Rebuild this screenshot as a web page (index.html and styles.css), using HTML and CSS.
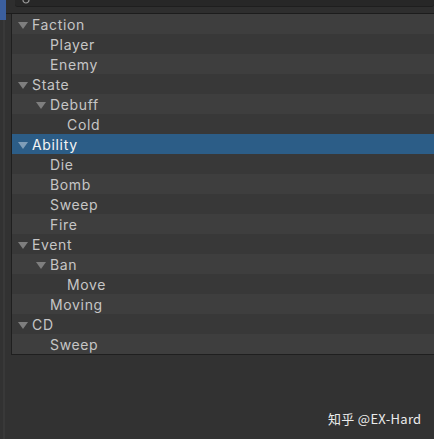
FILE: index.html
```html
<!DOCTYPE html>
<html>
<head>
<meta charset="utf-8">
<link rel="stylesheet" href="styles.css">
</head>
<body>
<div class="window">
  <div class="gutter">
    <div class="gutter-blue"></div>
    <div class="gutter-line"></div>
  </div>
  <div class="main">
    <div class="toolbar">
      <div class="search">
        <svg class="mag" width="8" height="6" viewBox="0 0 8 6"><circle cx="4" cy="0" r="3" fill="none" stroke="#9a9a9a" stroke-width="1.2"/></svg>
      </div>
    </div>
    <div class="tree">
      <div class="row l0 light"><span class="tri"></span><span class="label">Faction</span></div>
      <div class="row l1 dark"><span class="label">Player</span></div>
      <div class="row l1 light"><span class="label">Enemy</span></div>
      <div class="row l0 dark"><span class="tri"></span><span class="label">State</span></div>
      <div class="row l1 light"><span class="tri"></span><span class="label">Debuff</span></div>
      <div class="row l2 dark"><span class="label">Cold</span></div>
      <div class="row l0 selected"><span class="tri"></span><span class="label">Ability</span></div>
      <div class="row l1 dark"><span class="label">Die</span></div>
      <div class="row l1 light"><span class="label">Bomb</span></div>
      <div class="row l1 dark"><span class="label">Sweep</span></div>
      <div class="row l1 light"><span class="label">Fire</span></div>
      <div class="row l0 dark"><span class="tri"></span><span class="label">Event</span></div>
      <div class="row l1 light"><span class="tri"></span><span class="label">Ban</span></div>
      <div class="row l2 dark"><span class="label">Move</span></div>
      <div class="row l1 light"><span class="label">Moving</span></div>
      <div class="row l0 dark"><span class="tri"></span><span class="label">CD</span></div>
      <div class="row l1 light"><span class="label">Sweep</span></div>
    </div>
  </div>
  <div class="watermark">知乎 @EX-Hard</div>
</div>
</body>
</html>
```
FILE: styles.css
```css
html, body {
  margin: 0;
  padding: 0;
  background: #323232;
}
.window {
  position: relative;
  width: 434px;
  height: 439px;
  overflow: hidden;
  display: flex;
  background: #323232;
  font-family: Inter, "Noto Sans", "Noto Sans CJK SC", sans-serif;
}
.gutter {
  width: 6px;
  display: flex;
  flex-direction: column;
  flex-shrink: 0;
}
.gutter-blue {
  height: 20px;
  background: #3b5f9e;
  width: 6px;
}
.gutter-line {
  flex: 1;
  margin-left: 3px;
  width: 2px;
  background: #393939;
}
.main {
  flex: 1;
  display: flex;
  flex-direction: column;
}
.toolbar {
  height: 14px;
  background: #2e2e2e;
  border-bottom: 1px solid #1c1c1c;
  box-sizing: border-box;
  padding-left: 9px;
}
.search {
  height: 6px;
  background: #272727;
  border-bottom: 1px solid #1e1e1e;
  border-radius: 0 0 3px 3px;
  padding-left: 7px;
}
.mag {
  display: block;
}
.tree {
  margin-left: 5px;
  border-left: 1px solid #1f1f1f;
  border-bottom: 1px solid #1f1f1f;
}
.row {
  height: 20px;
  display: flex;
  align-items: center;
  color: #c6c6c6;
  font-size: 14px;
  letter-spacing: 0.65px;
}
.light { background: #3e3e3e; }
.dark { background: #383838; }
.selected { background: #2c5d87; color: #f4f4f4; }
.l0 { padding-left: 20px; }
.l1 { padding-left: 38px; }
.l2 { padding-left: 55px; }
.tri {
  width: 0;
  height: 0;
  border-left: 5px solid transparent;
  border-right: 5px solid transparent;
  border-top: 7px solid #7e7e7e;
  margin-left: -14px;
  margin-right: 4px;
  margin-top: 2px;
}
.selected .tri { border-top-color: #7f9db8; }
.label {
  line-height: 20px;
  padding-top: 2px;
}
.watermark {
  position: absolute;
  left: 328px;
  top: 409px;
  color: #ececec;
  font-size: 13px;
  font-family: "Noto Sans CJK SC", "Noto Sans", sans-serif;
  letter-spacing: 0.3px;
}
```
